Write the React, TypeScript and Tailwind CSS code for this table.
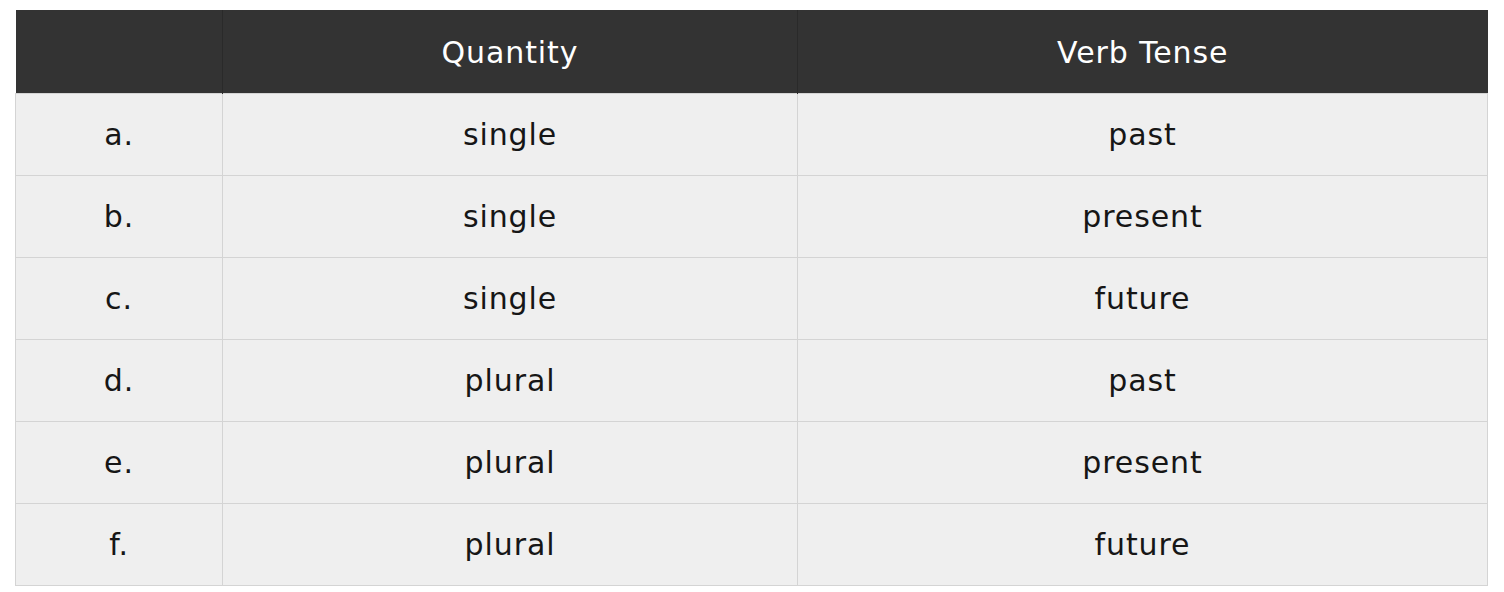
const rows = [
  { label: 'a.', quantity: 'single', tense: 'past' },
  { label: 'b.', quantity: 'single', tense: 'present' },
  { label: 'c.', quantity: 'single', tense: 'future' },
  { label: 'd.', quantity: 'plural', tense: 'past' },
  { label: 'e.', quantity: 'plural', tense: 'present' },
  { label: 'f.', quantity: 'plural', tense: 'future' },
];

export default function App() {
  return (
    <div className="w-[1504px] h-[592px] bg-white pt-[10px] pl-[15px] font-['DejaVu_Sans',sans-serif]">
      <table className="w-[1472px] border-collapse table-fixed text-[30px] tracking-[0.03em]">
        <colgroup>
          <col className="w-[207px]" />
          <col className="w-[575px]" />
          <col className="w-[690px]" />
        </colgroup>
        <thead>
          <tr className="h-[83px] bg-[#333333] text-white">
            <th className="font-normal border-r border-[#2a2a2a] pt-[2px]"></th>
            <th className="font-normal border-r border-[#2a2a2a] pt-[2px]">Quantity</th>
            <th className="font-normal pt-[2px]">Verb Tense</th>
          </tr>
        </thead>
        <tbody>
          {rows.map((r) => (
            <tr key={r.label} className="h-[82px] bg-[#efefef] text-[#161616] text-center">
              <td className="border border-[#d4d4d4]">{r.label}</td>
              <td className="border border-[#d4d4d4]">{r.quantity}</td>
              <td className="border border-[#d4d4d4]">{r.tense}</td>
            </tr>
          ))}
        </tbody>
      </table>
    </div>
  );
}
